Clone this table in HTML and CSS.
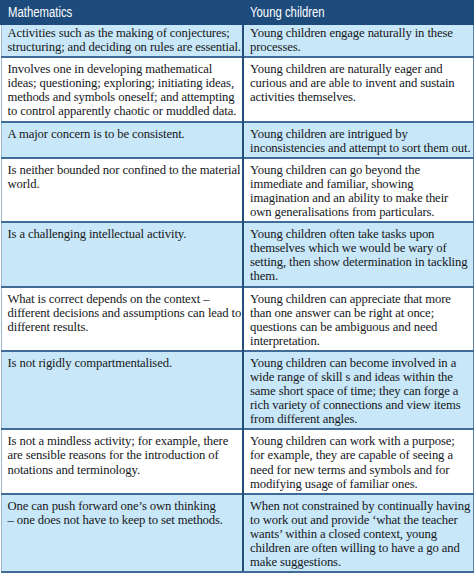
FILE: index.html
```html
<!DOCTYPE html>
<html lang="en">
<head>
<meta charset="utf-8">
<title>Mathematics and young children</title>
<link rel="stylesheet" href="styles.css">
</head>
<body>
<table class="compare">
  <thead>
    <tr><th class="col-left"><span class="head">Mathematics</span></th><th><span class="head">Young children</span></th></tr>
  </thead>
  <tbody>
    <tr class="shade first">
      <td>Activities such as the making of conjectures;<br>structuring; and deciding on rules are essential.</td>
      <td>Young children engage naturally in these<br>processes.</td>
    </tr>
    <tr>
      <td>Involves one in developing mathematical<br>ideas; questioning; exploring; initiating ideas,<br>methods and symbols oneself; and attempting<br>to control apparently chaotic or muddled data.</td>
      <td>Young children are naturally eager and<br>curious and are able to invent and sustain<br>activities themselves.</td>
    </tr>
    <tr class="shade">
      <td>A major concern is to be consistent.</td>
      <td>Young children are intrigued by<br>inconsistencies and attempt to sort them out.</td>
    </tr>
    <tr>
      <td>Is neither bounded nor confined to the material<br>world.</td>
      <td>Young children can go beyond the<br>immediate and familiar, showing<br>imagination and an ability to make their<br>own generalisations from particulars.</td>
    </tr>
    <tr class="shade">
      <td>Is a challenging intellectual activity.</td>
      <td>Young children often take tasks upon<br>themselves which we would be wary of<br>setting, then show determination in tackling<br>them.</td>
    </tr>
    <tr>
      <td>What is correct depends on the context –<br>different decisions and assumptions can lead to<br>different results.</td>
      <td>Young children can appreciate that more<br>than one answer can be right at once;<br>questions can be ambiguous and need<br>interpretation.</td>
    </tr>
    <tr class="shade">
      <td>Is not rigidly compartmentalised.</td>
      <td>Young children can become involved in a<br>wide range of skill s and ideas within the<br>same short space of time; they can forge a<br>rich variety of connections and view items<br>from different angles.</td>
    </tr>
    <tr>
      <td>Is not a mindless activity; for example, there<br>are sensible reasons for the introduction of<br>notations and terminology.</td>
      <td>Young children can work with a purpose;<br>for example, they are capable of seeing a<br>need for new terms and symbols and for<br>modifying usage of familiar ones.</td>
    </tr>
    <tr class="shade">
      <td>One can push forward one’s own thinking<br>– one does not have to keep to set methods.</td>
      <td>When not constrained by continually having<br>to work out and provide ‘what the teacher<br>wants’ within a closed context, young<br>children are often willing to have a go and<br>make suggestions.</td>
    </tr>
  </tbody>
</table>
</body>
</html>
```
FILE: styles.css
```css
html, body {
  margin: 0;
  padding: 0;
  background: #ffffff;
}

.compare {
  width: 474px;
  border-collapse: collapse;
  table-layout: fixed;
  font-family: "Liberation Serif", "Times New Roman", serif;
  font-size: 12.7px;
  letter-spacing: -0.12px;
  line-height: 14.1px;
  color: #16181b;
}

.compare th {
  background: #1d4c7c;
  color: #ffffff;
  font-family: "Liberation Sans", Arial, sans-serif;
  font-weight: normal;
  font-size: 14px;
  line-height: 17px;
  letter-spacing: 0;
  text-align: left;
  padding: 4px 6px 4px 6px;
  border-left: 2px solid #1d4c7c;
  white-space: nowrap;
}

.compare .head {
  display: inline-block;
  transform: scaleX(0.81);
  transform-origin: left center;
}

.compare th.col-left {
  width: 228px;
}

.compare td {
  vertical-align: top;
  padding: 4px 3px 2px 6px;
  border-top: 2px solid #3f6b96;
  border-left: 2px solid #244f7c;
  border-right: 1px solid #5b82a8;
  white-space: nowrap;
  overflow: hidden;
}

.compare td:first-child {
  border-left: 1px solid #9bb6cf;
}

.compare tr.shade td {
  background: #c8e7f8;
}

.compare tr.first td {
  border-top: none;
  padding-top: 1px;
  padding-bottom: 2px;
}

.compare tbody tr:last-child td {
  border-bottom: 2px solid #3f6b96;
}
```
